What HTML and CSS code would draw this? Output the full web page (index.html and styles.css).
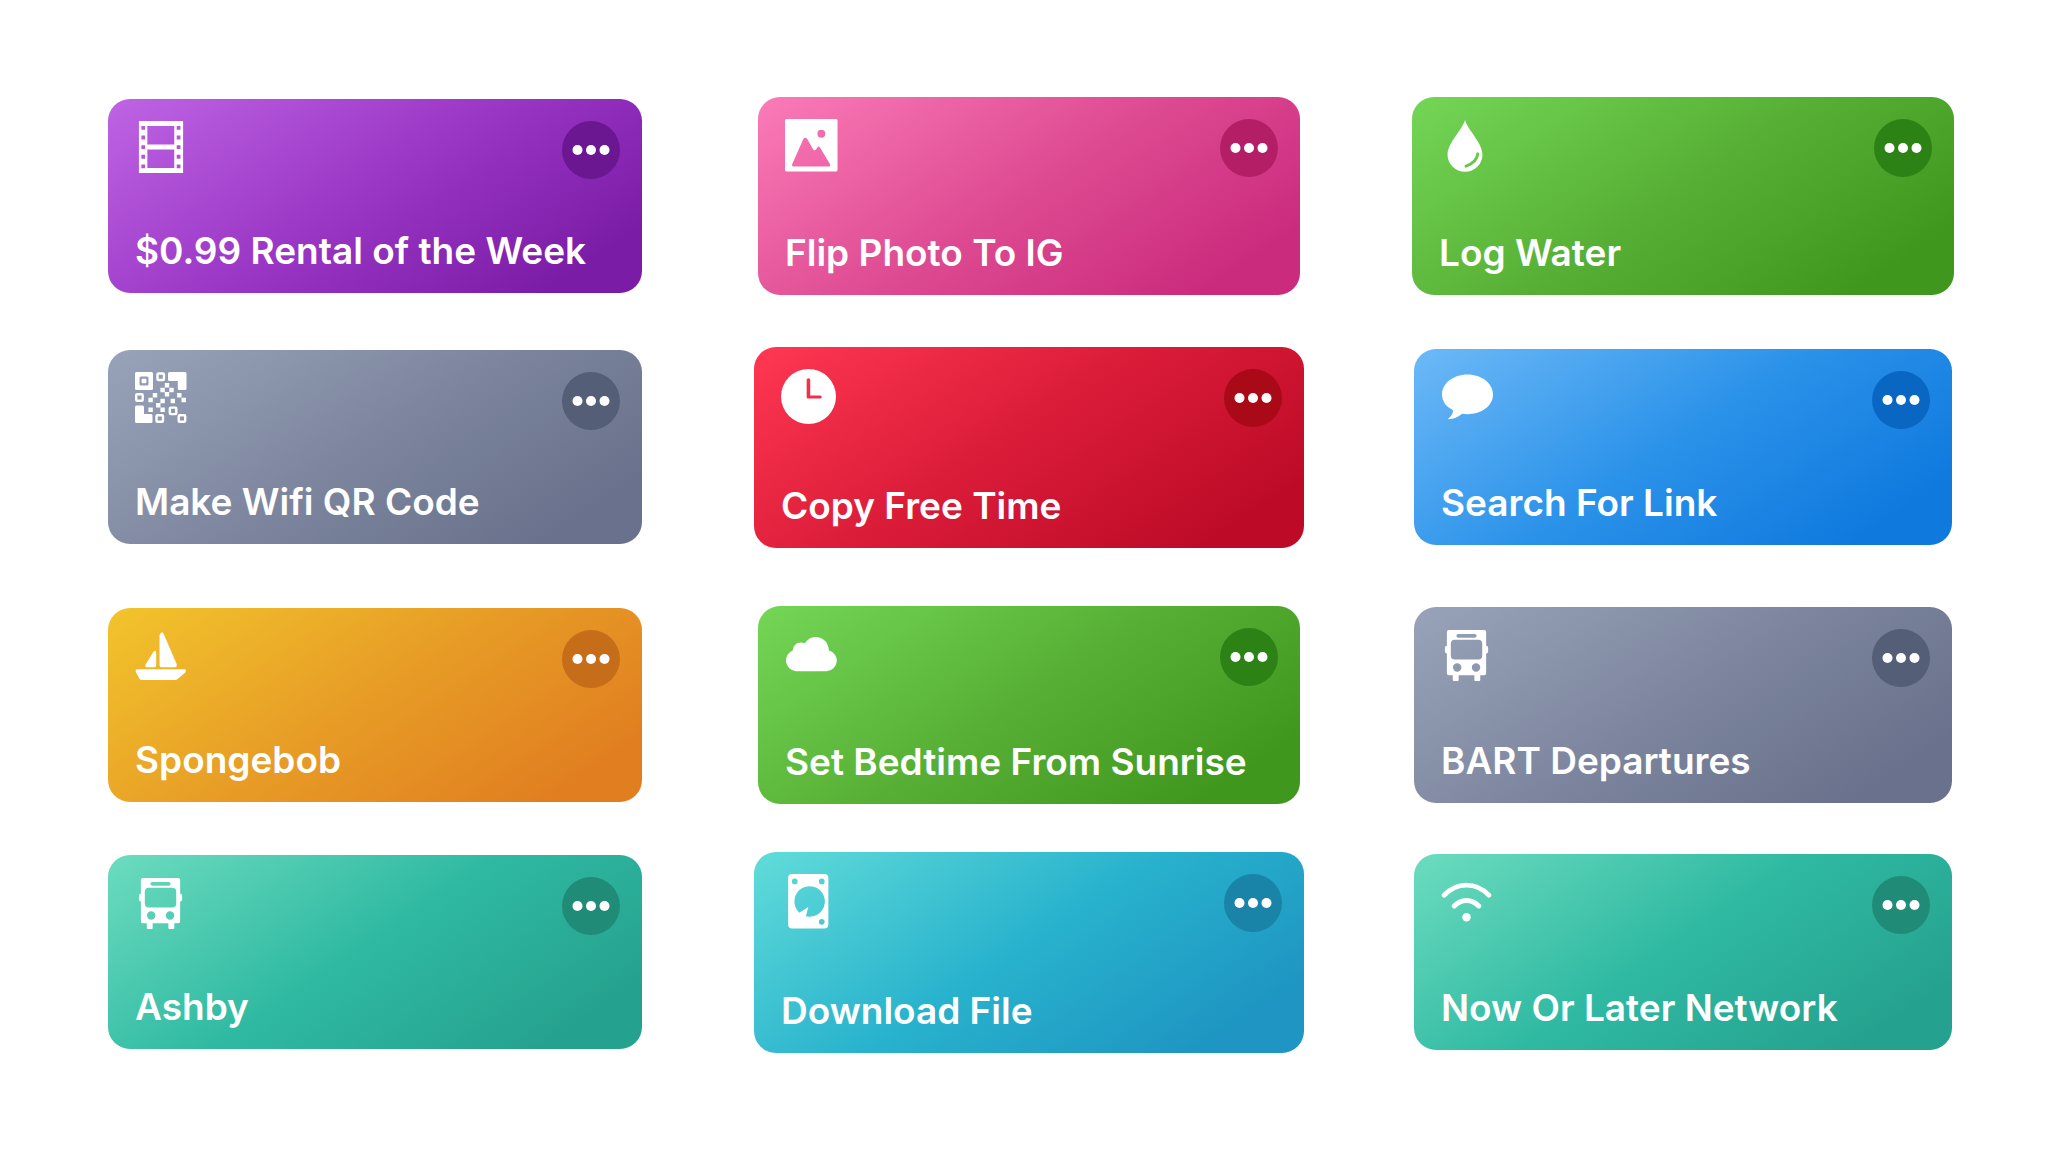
FILE: index.html
```html
<!DOCTYPE html>
<html lang="en">
<head>
    <meta charset="UTF-8">
    <meta name="viewport" content="width=device-width, initial-scale=1">
    <title>Shortcuts</title>
    <link rel="stylesheet" href="styles.css">
</head>

<body>
    <!-- shapes that are used more than once -->
    <svg class="sprite" aria-hidden="true">
        <symbol id="bus" viewBox="0 0 54 54">
            <path fill-rule="evenodd" d="M8 1H44Q46 1 46 3V17Q48 17 48 19V23Q48 25 46 25V45Q46 47 44 47H40V52Q40 53 39 53H35Q34 53 34 52V47H18V52Q18 53 17 53H13Q12 53 12 52V47H8Q6 47 6 45V25Q4 25 4 23V19Q4 17 6 17V3Q6 1 8 1ZM17.500 5.200A1.800 1.800 0 0 0 17.500 8.800H34.500A1.800 1.800 0 0 0 34.500 5.200ZM14 11Q10 11 10 15V27Q10 31 14 31H38Q42 31 42 27V15Q42 11 38 11ZM16.500 35A4.300 4.300 0 1 0 16.500 43.600A4.300 4.300 0 1 0 16.500 35ZM35.700 35A4.300 4.300 0 1 0 35.700 43.600A4.300 4.300 0 1 0 35.700 35Z"/>
        </symbol>
        <symbol id="dots" viewBox="0 0 58 58">
            <circle cx="15.500" cy="29" r="5"/>
            <circle cx="29" cy="29" r="5"/>
            <circle cx="42.500" cy="29" r="5"/>
        </symbol>
    </svg>

    <main class="shortcuts">
        <article class="card small purple">
            <div class="top">
                <svg class="icon" viewBox="0 0 54 54">
                    <path fill-rule="evenodd" d="M4 0H49V53H4ZM12.600 5V24H40V5ZM12.600 29V48H40V29ZM6.500 5H10.300V9H6.500ZM6.500 14.800H10.300V18.800H6.500ZM6.500 24.600H10.300V28.600H6.500ZM6.500 34.400H10.300V38.400H6.500ZM6.500 44.200H10.300V48.200H6.500ZM42.500 5H46.300V9H42.500ZM42.500 14.800H46.300V18.800H42.500ZM42.500 24.600H46.300V28.600H42.500ZM42.500 34.400H46.300V38.400H42.500ZM42.500 44.200H46.300V48.200H42.500Z"/>
                </svg>
                <button class="more" type="button" aria-label="Edit $0.99 Rental of the Week"><svg><use href="#dots"/></svg></button>
            </div>
            <h2>$0.99 Rental of the Week</h2>
        </article>

        <article class="card medium pink">
            <div class="top">
                <svg class="icon" viewBox="0 0 54 54">
                    <path fill-rule="evenodd" d="M1.500 0H52Q53.500 0 53.500 1.500V52Q53.500 53.500 52 53.500H1.500Q0 53.500 0 52V1.500Q0 0 1.500 0ZM37 11A4 4 0 1 0 37 19A4 4 0 1 0 37 11ZM18.600 20.600L7.500 45.500Q6.500 48.500 9 48.500H44Q46.800 48.500 45.600 45.500L35.800 29.200Q34.200 27 32.800 29.200Q30.400 33.500 28.600 30.700L22.800 20.600Q20.600 17.600 18.600 20.600Z"/>
                </svg>
                <button class="more" type="button" aria-label="Edit Flip Photo To IG"><svg><use href="#dots"/></svg></button>
            </div>
            <h2>Flip Photo To IG</h2>
        </article>

        <article class="card medium green">
            <div class="top">
                <svg class="icon" viewBox="0 0 54 54">
                    <mask id="shine">
                        <rect width="54" height="54" fill="#fff"/>
                        <path d="M39.500 35.500Q38.500 44 27.500 48" fill="none" stroke="#000" stroke-width="3" stroke-linecap="round"/>
                    </mask>
                    <path mask="url(#shine)" d="M26.500 1C29 11 44.300 24 44.300 36.500A17.800 17.300 0 0 1 8.700 36.500C8.700 24 24 11 26.500 1Z"/>
                </svg>
                <button class="more" type="button" aria-label="Edit Log Water"><svg><use href="#dots"/></svg></button>
            </div>
            <h2>Log Water</h2>
        </article>

        <article class="card small grey">
            <div class="top">
                <svg class="icon" viewBox="0 0 53 53">
                    <path fill-rule="evenodd" d="M1.500 0H16.500Q18 0 18 1.500V16.500Q18 18 16.500 18H1.500Q0 18 0 16.500V1.500Q0 0 1.500 0ZM6 4.500Q4.500 4.500 4.500 6V12Q4.500 13.500 6 13.500H12Q13.500 13.500 13.500 12V6Q13.500 4.500 12 4.500Z"/>
                    <rect x="6.600" y="6.700" width="4.800" height="4.600" rx="1"/>
                    <path d="M34.500 0H50Q51.500 0 51.500 1.500V16.500Q51.500 18 50 18H44Q42.800 18 42.800 16.500V9H34.500Q33 9 33 7.500V1.500Q33 0 34.500 0ZM1.500 33.500H7.500Q9 33.500 9 35V42H16Q17.500 42 17.500 43.500V49.500Q17.500 51 16 51H1.500Q0 51 0 49.500V35Q0 33.500 1.500 33.500Z"/>
                    <g fill="none" stroke="#fff" stroke-width="2.400">
                        <rect x="22.500" y="1.500" width="6.500" height="6.500" rx="1"/>
                        <rect x="1.200" y="22.300" width="6.500" height="6.500" rx="1"/>
                        <rect x="34.800" y="35.600" width="6.500" height="6.500" rx="1"/>
                        <rect x="21.500" y="43.300" width="6.500" height="6.500" rx="1"/>
                        <rect x="43.700" y="43.300" width="6.500" height="6.500" rx="1"/>
                    </g>
                    <path fill="none" stroke="#fff" stroke-width="4.400" d="M29.800 13.300h4.400M25.400 18h4.400M34.300 18h4.400M29.800 22.300h4.400M17.800 23.300h4.400M13.400 28h4.400M25.400 29h4.400M21.100 33.300h4.400M13.400 37.700h4.400M25.400 37.700h4.400M35.600 29h4.400M42.100 23.300h4.400M46.500 28h4.400"/>
                </svg>
                <button class="more" type="button" aria-label="Edit Make Wifi QR Code"><svg><use href="#dots"/></svg></button>
            </div>
            <h2>Make Wifi QR Code</h2>
        </article>

        <article class="card large red">
            <div class="top">
                <svg class="icon" viewBox="0 0 54 54">
                    <path fill-rule="evenodd" d="M27 0A27 27 0 1 0 27 54A27 27 0 1 0 27 0ZM25.200 10.500Q25.200 9 27 9Q28.700 9 28.700 10.500V26H38.500Q40 26 40 27.500Q40 29 38.500 29H26.500Q25.200 29 25.200 27.500Z"/>
                </svg>
                <button class="more" type="button" aria-label="Edit Copy Free Time"><svg><use href="#dots"/></svg></button>
            </div>
            <h2>Copy Free Time</h2>
        </article>

        <article class="card blue">
            <div class="top">
                <svg class="icon" viewBox="0 0 54 54">
                    <path d="M27 3.500C41.500 3.500 53 12.500 53 24S41.500 44 27 44Q24 44 21.500 43.500Q14.500 49.500 7 49Q12 45 12.300 40Q1 34.500 1 24C1 12.500 12.500 3.500 27 3.500Z"/>
                </svg>
                <button class="more" type="button" aria-label="Edit Search For Link"><svg><use href="#dots"/></svg></button>
            </div>
            <h2>Search For Link</h2>
        </article>

        <article class="card small orange">
            <div class="top">
                <svg class="icon" viewBox="0 0 54 54">
                    <path d="M2 40H50.500Q52.500 40.500 51.500 43L43.500 50Q42.500 51 41 51H7Q5.500 51 4.700 50L1 43Q0 40.500 2 40ZM25 5Q27.500 0 29.500 4.500L42.500 35Q43 38 40.500 38H27Q25 38 25 36ZM19 22Q21.600 20 21.600 23V36.500Q21.600 38 20 38H12Q9.500 38 11 35Z"/>
                </svg>
                <button class="more" type="button" aria-label="Edit Spongebob"><svg><use href="#dots"/></svg></button>
            </div>
            <h2>Spongebob</h2>
        </article>

        <article class="card medium green">
            <div class="top">
                <svg class="icon" viewBox="0 0 54 54">
                    <path d="M11 44A11 11 0 0 1 8 22.800C8.300 16.500 14 13 20.300 15.500C27 4.500 44 8 44.800 22.800A10.800 10.800 0 0 1 42.500 44Z"/>
                </svg>
                <button class="more" type="button" aria-label="Edit Set Bedtime From Sunrise"><svg><use href="#dots"/></svg></button>
            </div>
            <h2>Set Bedtime From Sunrise</h2>
        </article>

        <article class="card grey">
            <div class="top">
                <svg class="icon"><use href="#bus"/></svg>
                <button class="more" type="button" aria-label="Edit BART Departures"><svg><use href="#dots"/></svg></button>
            </div>
            <h2>BART Departures</h2>
        </article>

        <article class="card small teal">
            <div class="top">
                <svg class="icon"><use href="#bus"/></svg>
                <button class="more" type="button" aria-label="Edit Ashby"><svg><use href="#dots"/></svg></button>
            </div>
            <h2>Ashby</h2>
        </article>

        <article class="card large cyan">
            <div class="top">
                <svg class="icon" viewBox="0 0 54 54">
                    <path fill-rule="evenodd" d="M11 0H42.500Q46.500 0 46.500 4V49.500Q46.500 53.500 42.500 53.500H11Q7 53.500 7 49.500V4Q7 0 11 0ZM13.500 4.500A2.800 2.800 0 1 0 13.500 10.100A2.800 2.800 0 1 0 13.500 4.500ZM40 4.500A2.800 2.800 0 1 0 40 10.100A2.800 2.800 0 1 0 40 4.500ZM40 44.200A2.800 2.800 0 1 0 40 49.800A2.800 2.800 0 1 0 40 44.200ZM18 38A15 15 0 1 1 24.500 41.500L26.800 32.300Z"/>
                </svg>
                <button class="more" type="button" aria-label="Edit Download File"><svg><use href="#dots"/></svg></button>
            </div>
            <h2>Download File</h2>
        </article>

        <article class="card teal">
            <div class="top">
                <svg class="icon" viewBox="0 0 54 54">
                    <path fill="none" stroke="#fff" stroke-width="5" stroke-linecap="round" d="M3.300 19.500Q13 9.300 26 9.300T48.700 19.500M13.500 30.500Q19 25 26 25T38.500 30.500"/>
                    <circle cx="26" cy="42" r="4.300"/>
                </svg>
                <button class="more" type="button" aria-label="Edit Now Or Later Network"><svg><use href="#dots"/></svg></button>
            </div>
            <h2>Now Or Later Network</h2>
        </article>
    </main>
</body>
</html>
```
FILE: styles.css
```css
* {
    box-sizing: border-box;
}

body {
    margin: 0;
    background-color: white;
    font-family: Inter, "Liberation Sans", sans-serif;
}

.sprite {
    display: none;
}

.shortcuts {
    display: grid;
    grid-template-columns: repeat(3, 1fr);
    grid-template-rows: 248px 254px 262px 232px;
    align-items: center;
    padding: 72px 38px 72px 48px;
}

/* cards */

.card {
    display: flex;
    flex-direction: column;
    justify-content: space-between;
    min-height: 196px;
    margin: 0 58px;
    padding: 22px 22px 20px 27px;
    border-radius: 22px;
    color: white;
    background-image: linear-gradient(146deg, var(--light), var(--middle) 48%, var(--dark) 88%);
}

.small {
    min-height: 194px;
    margin: 0 60px;
}

.medium {
    min-height: 198px;
    margin: 0 56px;
}

.large {
    min-height: 201px;
    margin: 0 52px;
}

.top {
    display: flex;
    justify-content: space-between;
}

.icon {
    width: 53px;
    height: 53px;
    fill: white;
}

.large .icon {
    width: 55px;
    height: 55px;
}

h2 {
    margin: 0;
    font-size: 37px;
    font-weight: 600;
    line-height: 44px;
    white-space: nowrap;
}

.more {
    width: 58px;
    height: 58px;
    padding: 0;
    border: none;
    border-radius: 50%;
    background-color: var(--button);
    cursor: pointer;
}

.more svg {
    display: block;
    width: 58px;
    height: 58px;
    fill: white;
}

/* colours */

.purple {
    --light: #bf64e5;
    --middle: #9a37c5;
    --dark: #7b1ca6;
    --button: #6a1791;
}

.pink {
    --light: #fb7bb8;
    --middle: #de4b92;
    --dark: #cb2b7d;
    --button: #b31e67;
}

.green {
    --light: #74d656;
    --middle: #57b035;
    --dark: #40971e;
    --button: #2d8216;
}

.grey {
    --light: #98a3b9;
    --middle: #7d869e;
    --dark: #69718c;
    --button: #545e76;
}

.red {
    --light: #ff3752;
    --middle: #d91b38;
    --dark: #bd0b27;
    --button: #aa0a17;
}

.blue {
    --light: #6db9f7;
    --middle: #2b92e9;
    --dark: #0f79de;
    --button: #0966c2;
}

.orange {
    --light: #f2c42c;
    --middle: #e79c26;
    --dark: #e17f20;
    --button: #c66d1a;
}

.teal {
    --light: #6cdcbf;
    --middle: #2fb9a2;
    --dark: #25a28f;
    --button: #208b77;
}

.cyan {
    --light: #61dcd9;
    --middle: #28b2cd;
    --dark: #1e95c2;
    --button: #1a83a8;
}
```
